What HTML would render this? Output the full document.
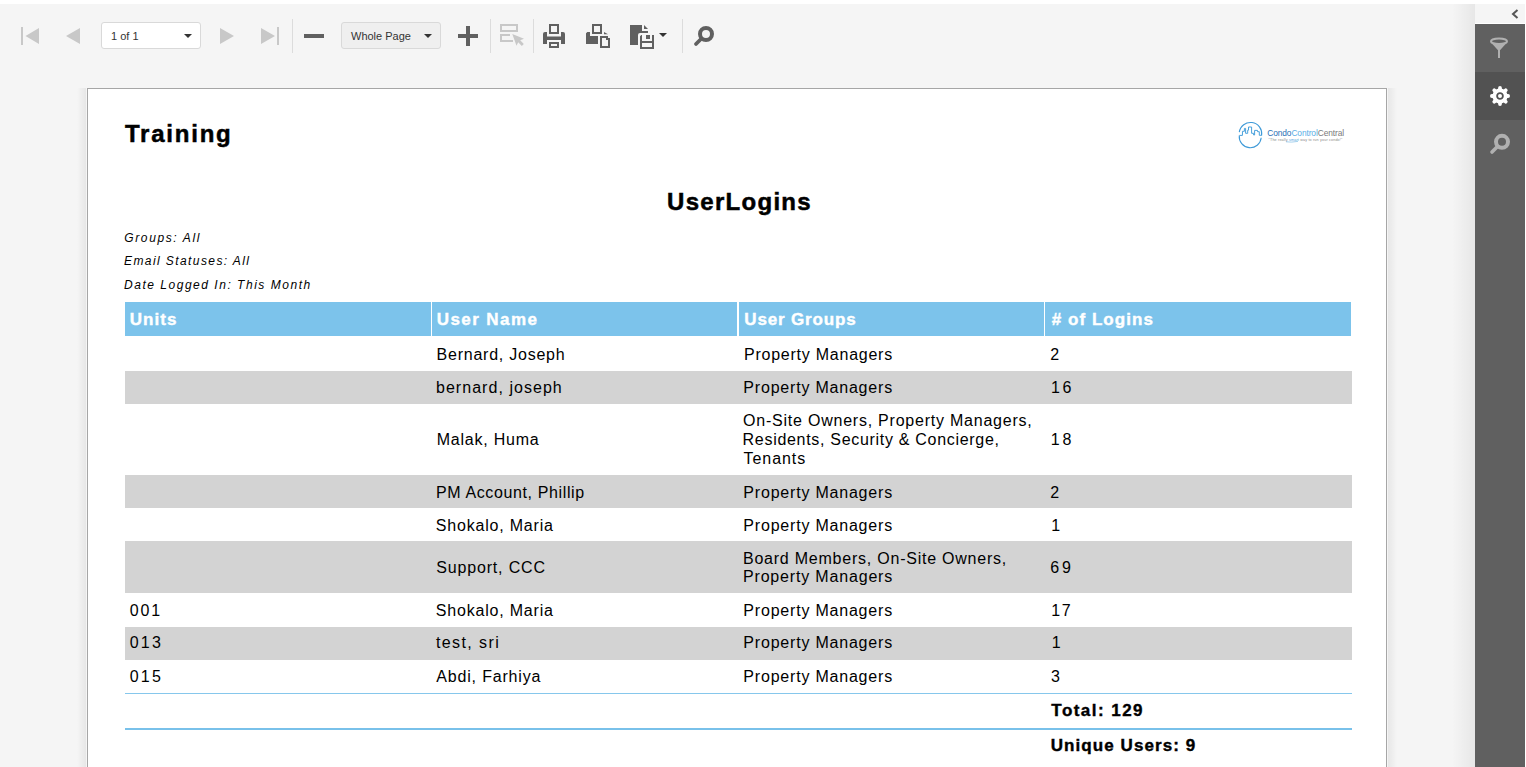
<!DOCTYPE html>
<html><head><meta charset="utf-8">
<style>
*{box-sizing:border-box}
html,body{margin:0;padding:0;width:1526px;height:767px;overflow:hidden;background:#fff;font-family:"Liberation Sans",sans-serif}
.abs{position:absolute}
#viewer{position:absolute;left:0;top:4px;width:1525px;height:763px;background:#f5f5f5;overflow:hidden}
.sep{position:absolute;top:15px;width:1px;height:34px;background:#dcdcdc}
.sel{position:absolute;top:18px;height:27px;border:1px solid #d9d9d9;border-radius:3px;font-size:11px;color:#333}
.sel span{position:absolute;left:9px;top:6px;line-height:14px}
.sel i{position:absolute;top:11px;width:0;height:0;border-left:4px solid transparent;border-right:4px solid transparent;border-top:4px solid #333}
#page{position:absolute;left:87px;top:88px;width:1300px;height:700px;background:#fff;border:1px solid #a6a6a6}
.shl{position:absolute;top:88px;left:77px;width:9px;height:680px;background:linear-gradient(to right,rgba(0,0,0,0),rgba(0,0,0,0.06))}
.shr{position:absolute;top:88px;left:1388px;width:9px;height:680px;background:linear-gradient(to left,rgba(0,0,0,0),rgba(0,0,0,0.06))}
.t{position:absolute;white-space:nowrap;color:#000}
.row{position:absolute;left:125px;width:1226px}
.c{position:absolute;top:0;bottom:0;display:flex;flex-direction:column;justify-content:center;font-size:16px;line-height:19px;padding-left:5px;white-space:nowrap;color:#000}
.c span{display:block}
.c1{left:0;width:306px}.c2{left:307px;width:305px}.c3{left:614px;width:305px}.c4{left:920px;width:306px}
.g{background:#d3d3d3;width:1227px}
.hd .c{color:#fff;font-weight:bold;font-size:17px;background:#7cc3eb;-webkit-text-stroke:0.4px #fff}
</style></head><body>
<div id="viewer">
  <!-- toolbar (coords relative to viewer: y-4) -->
  <svg class="abs" style="left:0;top:-4px" width="1526" height="70" viewBox="0 0 1526 70">
    <!-- first page -->
    <rect x="21" y="27" width="2" height="18" fill="#c8c8c8"/>
    <polygon points="25.5,36 39,28 39,44" fill="#c8c8c8"/>
    <!-- prev -->
    <polygon points="66,36 80,28 80,44" fill="#c8c8c8"/>
    <!-- next -->
    <polygon points="234,36 220,28 220,44" fill="#c8c8c8"/>
    <!-- last -->
    <polygon points="275,36 261,28 261,44" fill="#c8c8c8"/>
    <rect x="277" y="27" width="2" height="18" fill="#c8c8c8"/>
    <!-- minus -->
    <rect x="304" y="34" width="20" height="4" fill="#606060"/>
    <!-- plus -->
    <rect x="458" y="34" width="20" height="4" fill="#606060"/>
    <rect x="466" y="26" width="4" height="20" fill="#606060"/>
    <!-- multiselect disabled -->
    <rect x="501" y="25" width="16" height="6" fill="none" stroke="#c8c8c8" stroke-width="2"/>
    <rect x="500" y="34" width="10" height="2" fill="#c8c8c8"/>
    <rect x="500" y="34" width="2" height="8" fill="#c8c8c8"/>
    <rect x="500" y="40" width="13" height="2" fill="#c8c8c8"/>
    <polygon points="512.3,34 524,38.8 520.2,40.2 523.8,44 521.8,46 518.2,42.2 516.5,45.8" fill="#c8c8c8"/>
    <!-- print -->
    <rect x="550" y="25" width="8" height="8" fill="none" stroke="#606060" stroke-width="2"/>
    <path d="M545 32 H547 V44 H543 V34 Q543 32 545 32 Z" fill="#606060"/>
    <path d="M563 32 H561 V44 H565 V34 Q565 32 563 32 Z" fill="#606060"/>
    <rect x="543" y="36.5" width="22" height="3.5" fill="#606060"/>
    <rect x="550" y="43" width="8" height="4" fill="none" stroke="#606060" stroke-width="2"/>
    <!-- print page -->
    <rect x="593" y="25" width="8" height="8" fill="none" stroke="#606060" stroke-width="2"/>
    <path d="M587.3 32 H590 V36 H598 V44 H586 V33.3 Z" fill="#606060"/>
    <rect x="600" y="36" width="8" height="2" fill="#606060"/>
    <rect x="600" y="36" width="2" height="12" fill="#606060"/>
    <rect x="600" y="46" width="10" height="2" fill="#606060"/>
    <rect x="608" y="38" width="2" height="10" fill="#606060"/>
    <rect x="606" y="38" width="2" height="2" fill="#606060"/>
    <polygon points="604,32 604,34.2 608,34.2" fill="#606060"/>
    <!-- export -->
    <path d="M630 25 H642 V31 H648 V33 H640 Q638 33 638 35 V45 H630 Z" fill="#606060"/>
    <polygon points="644,25 644,29 648,29" fill="#606060"/>
    <path d="M641.3 35 H642 V49 H640 V36.3 Z" fill="#606060"/>
    <rect x="652" y="35" width="2" height="14" fill="#606060"/>
    <rect x="640" y="47" width="14" height="2" fill="#606060"/>
    <rect x="642" y="41" width="10" height="2" fill="#606060"/>
    <rect x="646" y="35" width="4" height="4" fill="#606060"/>
    <polygon points="659,33 667,33 663,37" fill="#333"/>
    <!-- search -->
    <circle cx="706" cy="34" r="6" fill="none" stroke="#606060" stroke-width="4"/>
    <line x1="696" y1="44" x2="701" y2="39" stroke="#606060" stroke-width="3.8" stroke-linecap="round"/>
  </svg>
  <div class="sep" style="left:292px"></div>
  <div class="sep" style="left:490px"></div>
  <div class="sep" style="left:533px"></div>
  <div class="sep" style="left:682px"></div>
  <div class="sel" style="left:101px;width:100px;background:#fff"><span>1 of 1</span><i style="left:82px"></i></div>
  <div class="sel" style="left:341px;width:100px;background:#efefef"><span>Whole Page</span><i style="left:82px"></i></div>
  <!-- right shadow near panel -->
  <div class="abs" style="left:1452px;top:0;width:23px;height:763px;background:linear-gradient(to right,rgba(0,0,0,0),rgba(0,0,0,0.06))"></div>
</div>

<div class="shl"></div><div class="shr"></div>
<div id="page"></div>
<div class="t" style="left:125px;top:118px;font-size:24px;font-weight:bold;-webkit-text-stroke:0.5px #000"><span id="training" style="position:relative;left:-0.05px;top:1.67px;letter-spacing:1.779px;">Training</span></div>
<div class="t" style="left:666px;top:186px;font-size:24px;font-weight:bold;-webkit-text-stroke:0.5px #000"><span id="userlogins" style="position:relative;left:1.10px;top:2.03px;letter-spacing:1.283px;">UserLogins</span></div>
<div class="t" style="left:125px;top:229px;font-size:12px;font-style:italic"><span id="f1" style="position:relative;left:-0.70px;top:1.68px;letter-spacing:1.615px;">Groups: All</span></div>
<div class="t" style="left:125px;top:252px;font-size:12px;font-style:italic"><span id="f2" style="position:relative;left:-1.00px;top:1.58px;letter-spacing:1.411px;">Email Statuses: All</span></div>
<div class="t" style="left:125px;top:276px;font-size:12px;font-style:italic"><span id="f3" style="position:relative;left:-1.00px;top:1.85px;letter-spacing:1.524px;">Date Logged In: This Month</span></div>
<!-- logo -->
<svg class="abs" style="left:1236px;top:120px" width="110" height="30" viewBox="0 0 110 30">
  <path d="M3.3 12.1 A11 11 0 0 1 25.6 15.3" fill="none" stroke="#3e9ad8" stroke-width="1.1"/>
  <path d="M3.3 15.6 A11 11 0 0 0 25.2 17.8" fill="none" stroke="#3e9ad8" stroke-width="1.1"/>
  <path d="M3.3 15.4 H6.45 V11.3 H8.4 V8.4 H9.6 V13.3 H11.7 V10.2 H12.5 V7 H15.6 V13.3 H17.6 V15 H18.6 V10.4 H21.5 V11.7 H23.3 V15.3 H25.8" fill="none" stroke="#4aa2dc" stroke-width="1"/>
  <text x="31.2" y="16" font-family="Liberation Sans" font-size="8.4" fill="#2a6fb5" letter-spacing="-0.1">Condo<tspan fill="#5aaee6">Control</tspan><tspan fill="#7a7a7a">Central</tspan></text>
  <text x="32.5" y="20.5" font-family="Liberation Sans" font-size="3.7" fill="#8a8a8a" letter-spacing="0.16">"The really <tspan fill="#4aa2dc">smart</tspan> way to run your condo!"</text>
  <path d="M50 21.8 Q55 22.6 62 21.4" fill="none" stroke="#4aa2dc" stroke-width="0.5"/>
</svg>
<div class="row hd" style="top:302px;height:34px"><div class="c c1"><span id="h1" style="position:relative;left:-0.30px;top:0.35px;letter-spacing:1.038px;">Units</span></div><div class="c c2"><span id="h2" style="position:relative;left:-0.30px;top:0.35px;letter-spacing:1.425px;">User Name</span></div><div class="c c3"><span id="h3" style="position:relative;left:0.30px;top:0.35px;letter-spacing:0.835px;">User Groups</span></div><div class="c c4"><span id="h4" style="position:relative;left:1.65px;top:0.35px;letter-spacing:1.065px;"># of Logins</span></div></div>
<div class="row" style="top:336px;height:35px"><div class="c c1"></div><div class="c c2"><span id="r0c2" style="position:relative;left:-0.40px;top:1.32px;letter-spacing:0.757px;">Bernard, Joseph</span></div><div class="c c3"><span id="r0c3l0" style="position:relative;left:-0.05px;top:1.32px;letter-spacing:0.762px;">Property Managers</span></div><div class="c c4"><span id="r0c4" style="position:relative;left:0.20px;top:1.32px;letter-spacing:0.700px;">2</span></div></div>
<div class="row g" style="top:371px;height:33px"><div class="c c1"></div><div class="c c2"><span id="r1c2" style="position:relative;left:-1.05px;top:-0.40px;letter-spacing:1.043px;">bernard, joseph</span></div><div class="c c3"><span id="r1c3l0" style="position:relative;left:-0.65px;top:-0.40px;letter-spacing:0.794px;">Property Managers</span></div><div class="c c4"><span id="r1c4" style="position:relative;left:1.10px;top:-0.40px;letter-spacing:2.400px;">16</span></div></div>
<div class="row" style="top:404px;height:71px"><div class="c c1"></div><div class="c c2"><span id="r2c2" style="position:relative;left:-0.35px;top:-0.15px;letter-spacing:0.775px;">Malak, Huma</span></div><div class="c c3"><span id="r2c3l0" style="position:relative;left:-0.90px;top:0.12px;letter-spacing:0.769px;">On-Site Owners, Property Managers,</span><span id="r2c3l1" style="position:relative;left:-1.40px;top:0.27px;letter-spacing:0.697px;">Residents, Security &amp; Concierge,</span><span id="r2c3l2" style="position:relative;left:-0.40px;top:-0.03px;letter-spacing:0.933px;">Tenants</span></div><div class="c c4"><span id="r2c4" style="position:relative;left:0.75px;top:-0.15px;letter-spacing:2.800px;">18</span></div></div>
<div class="row g" style="top:475px;height:33px"><div class="c c1"></div><div class="c c2"><span id="r3c2" style="position:relative;left:-1.00px;top:1.18px;letter-spacing:0.622px;">PM Account, Phillip</span></div><div class="c c3"><span id="r3c3l0" style="position:relative;left:-0.65px;top:1.18px;letter-spacing:0.794px;">Property Managers</span></div><div class="c c4"><span id="r3c4" style="position:relative;left:0.20px;top:1.18px;letter-spacing:0.700px;">2</span></div></div>
<div class="row" style="top:508px;height:33px"><div class="c c1"></div><div class="c c2"><span id="r4c2" style="position:relative;left:-1.20px;top:1.10px;letter-spacing:0.796px;">Shokalo, Maria</span></div><div class="c c3"><span id="r4c3l0" style="position:relative;left:-0.65px;top:1.10px;letter-spacing:0.794px;">Property Managers</span></div><div class="c c4"><span id="r4c4" style="position:relative;left:1.15px;top:1.10px;letter-spacing:0.700px;">1</span></div></div>
<div class="row g" style="top:541px;height:52px"><div class="c c1"></div><div class="c c2"><span id="r5c2" style="position:relative;left:-0.70px;top:0.42px;letter-spacing:0.823px;">Support, CCC</span></div><div class="c c3"><span id="r5c3l0" style="position:relative;left:-1.00px;top:1.02px;letter-spacing:0.769px;">Board Members, On-Site Owners,</span><span id="r5c3l1" style="position:relative;left:-1.00px;top:-0.35px;letter-spacing:0.825px;">Property Managers</span></div><div class="c c4"><span id="r5c4" style="position:relative;left:0.35px;top:0.42px;letter-spacing:2.800px;">69</span></div></div>
<div class="row" style="top:593px;height:34px"><div class="c c1"><span id="r6c1" style="position:relative;left:-0.30px;top:0.98px;letter-spacing:1.850px;">001</span></div><div class="c c2"><span id="r6c2" style="position:relative;left:-1.20px;top:0.98px;letter-spacing:0.796px;">Shokalo, Maria</span></div><div class="c c3"><span id="r6c3l0" style="position:relative;left:-0.65px;top:0.98px;letter-spacing:0.794px;">Property Managers</span></div><div class="c c4"><span id="r6c4" style="position:relative;left:1.15px;top:0.98px;letter-spacing:1.750px;">17</span></div></div>
<div class="row g" style="top:627px;height:33px"><div class="c c1"><span id="r7c1" style="position:relative;left:-0.30px;top:-0.75px;letter-spacing:2.200px;">013</span></div><div class="c c2"><span id="r7c2" style="position:relative;left:-1.05px;top:-0.75px;letter-spacing:1.406px;">test, sri</span></div><div class="c c3"><span id="r7c3l0" style="position:relative;left:-0.65px;top:-0.75px;letter-spacing:0.794px;">Property Managers</span></div><div class="c c4"><span id="r7c4" style="position:relative;left:1.65px;top:-0.75px;letter-spacing:0.700px;">1</span></div></div>
<div class="row" style="top:660px;height:33px"><div class="c c1"><span id="r8c1" style="position:relative;left:-0.30px;top:-0.17px;letter-spacing:2.200px;">015</span></div><div class="c c2"><span id="r8c2" style="position:relative;left:-0.70px;top:-0.17px;letter-spacing:0.817px;">Abdi, Farhiya</span></div><div class="c c3"><span id="r8c3l0" style="position:relative;left:-0.65px;top:-0.17px;letter-spacing:0.794px;">Property Managers</span></div><div class="c c4"><span id="r8c4" style="position:relative;left:1.00px;top:-0.17px;letter-spacing:0.700px;">3</span></div></div>
<div class="abs" style="left:125px;top:693px;width:1227px;height:1px;background:#86c7ec"></div>
<div class="t" style="left:1050px;top:700px;font-size:17px;font-weight:bold;-webkit-text-stroke:0.4px #000"><span id="total" style="position:relative;left:1.30px;top:1.49px;letter-spacing:1.456px;">Total: 129</span></div>
<div class="abs" style="left:125px;top:728px;width:1227px;height:2px;background:#79c1ea"></div>
<div class="t" style="left:1050px;top:735px;font-size:17px;font-weight:bold;-webkit-text-stroke:0.4px #000"><span id="unique" style="position:relative;left:0.70px;top:0.55px;letter-spacing:1.082px;">Unique Users: 9</span></div>
<!-- right panel -->
<div class="abs" style="left:1475px;top:4px;width:50px;height:19px;background:#f5f5f5"></div>
<div class="abs" style="left:1475px;top:23px;width:50px;height:1px;background:#fff"></div>
<div class="abs" style="left:1475px;top:24px;width:50px;height:743px;background:#606060"></div>
<div class="abs" style="left:1475px;top:72px;width:50px;height:48px;background:#525252"></div>
<svg class="abs" style="left:1475px;top:0" width="51" height="170" viewBox="1475 0 51 170">
  <path d="M1517.5 10 L1513 14 L1517.5 18" fill="none" stroke="#555" stroke-width="2"/>
  <!-- funnel -->
  <ellipse cx="1499" cy="41.3" rx="8" ry="2.8" fill="none" stroke="#b0b0b0" stroke-width="2"/>
  <path d="M1491 42.5 L1497.8 50 H1500.2 L1507 42.5 Q1499 46 1491 42.5 Z" fill="#b0b0b0"/>
  <rect x="1498" y="50" width="2" height="8" fill="#b0b0b0"/>
  <!-- gear -->
  <g transform="translate(1500 96)" fill="#fff">
    <circle r="7.6"/>
    <rect x="-1.9" y="-10" width="3.8" height="5" rx="1.9" transform="rotate(0)"/><rect x="-1.9" y="-10" width="3.8" height="5" rx="1.9" transform="rotate(45)"/><rect x="-1.9" y="-10" width="3.8" height="5" rx="1.9" transform="rotate(90)"/><rect x="-1.9" y="-10" width="3.8" height="5" rx="1.9" transform="rotate(135)"/><rect x="-1.9" y="-10" width="3.8" height="5" rx="1.9" transform="rotate(180)"/><rect x="-1.9" y="-10" width="3.8" height="5" rx="1.9" transform="rotate(225)"/><rect x="-1.9" y="-10" width="3.8" height="5" rx="1.9" transform="rotate(270)"/><rect x="-1.9" y="-10" width="3.8" height="5" rx="1.9" transform="rotate(315)"/>
    <circle r="2.9" fill="none" stroke="#525252" stroke-width="1.8"/>
  </g>
  <!-- search -->
  <circle cx="1502" cy="141.8" r="6" fill="none" stroke="#b0b0b0" stroke-width="4"/>
  <line x1="1492" y1="152" x2="1497" y2="147" stroke="#b0b0b0" stroke-width="3.6" stroke-linecap="round"/>
</svg>
</body></html>
